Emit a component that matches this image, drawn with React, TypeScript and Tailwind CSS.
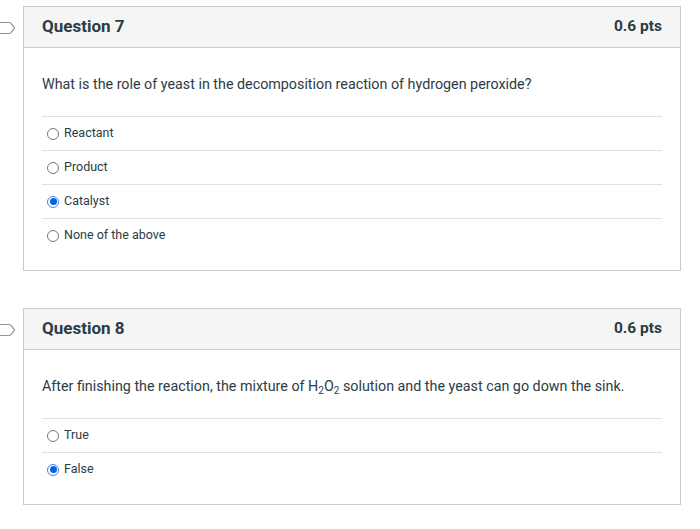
import type { ReactNode } from "react";

interface Question {
  title: string;
  points: string;
  prompt: ReactNode;
  answers: string[];
  selected: number;
}

const QUESTIONS: Question[] = [
  {
    title: "Question 7",
    points: "0.6 pts",
    prompt: "What is the role of yeast in the decomposition reaction of hydrogen peroxide?",
    answers: ["Reactant", "Product", "Catalyst", "None of the above"],
    selected: 2,
  },
  {
    title: "Question 8",
    points: "0.6 pts",
    prompt: (
      <>
        After finishing the reaction, the mixture of H<sub className="text-[10px]">2</sub>O
        <sub className="text-[10px]">2</sub> solution and the yeast can go down the sink.
      </>
    ),
    answers: ["True", "False"],
    selected: 1,
  },
];

function FlagIcon() {
  return (
    <svg width="16" height="14" viewBox="0 0 16 14" fill="none" className="shrink-0">
      <path
        d="M-6 1.5 H9 Q10.2 1.5 11 2.4 L14 6.2 Q14.6 7 14 7.8 L11 11.6 Q10.2 12.5 9 12.5 H-6"
        stroke="#8a959d"
        strokeWidth="1.2"
      />
    </svg>
  );
}

function Radio({ checked }: { checked: boolean }) {
  if (checked) {
    return (
      <span className="w-[12px] h-[12px] rounded-full border border-[#3d86e6] flex items-center justify-center bg-white shrink-0">
        <span className="w-[7px] h-[7px] rounded-full bg-[#0a62d6]" />
      </span>
    );
  }
  return <span className="w-[12px] h-[12px] rounded-full border border-[#6e7980] bg-white shrink-0" />;
}

function QuestionCard({ q }: { q: Question }) {
  return (
    <div className="flex">
      <div className="w-[23px] pt-[15px]">
        <FlagIcon />
      </div>
      <div className="w-[658px] border border-[#c7cdd1] bg-white">
        <div className="h-[41px] bg-[#f5f5f5] border-b border-[#c7cdd1] flex items-center justify-between px-[18px]">
          <span className="text-[17px] font-bold text-[#2d3b45]">{q.title}</span>
          <span className="text-[15.5px] font-bold text-[#2d3b45]">{q.points}</span>
        </div>
        <div className="px-[18px] pt-[26px] pb-[18px]">
          <p className="text-[14.3px] leading-5 text-[#2d3b45] mb-[22px]">{q.prompt}</p>
          <div>
            {q.answers.map((a, i) => (
              <div
                key={a}
                className="h-[34px] flex items-center gap-[5px] pl-[5px] border-t border-[#dfe3e6]"
              >
                <Radio checked={i === q.selected} />
                <span className="text-[12.5px] text-[#2d3b45]">{a}</span>
              </div>
            ))}
          </div>
        </div>
      </div>
    </div>
  );
}

export default function App() {
  return (
    <div
      className="w-[700px] h-[529px] bg-white pt-[6px] flex flex-col gap-[37px] overflow-hidden"
      style={{ fontFamily: "Roboto, 'Liberation Sans', sans-serif" }}
    >
      {QUESTIONS.map((q) => (
        <QuestionCard key={q.title} q={q} />
      ))}
    </div>
  );
}
